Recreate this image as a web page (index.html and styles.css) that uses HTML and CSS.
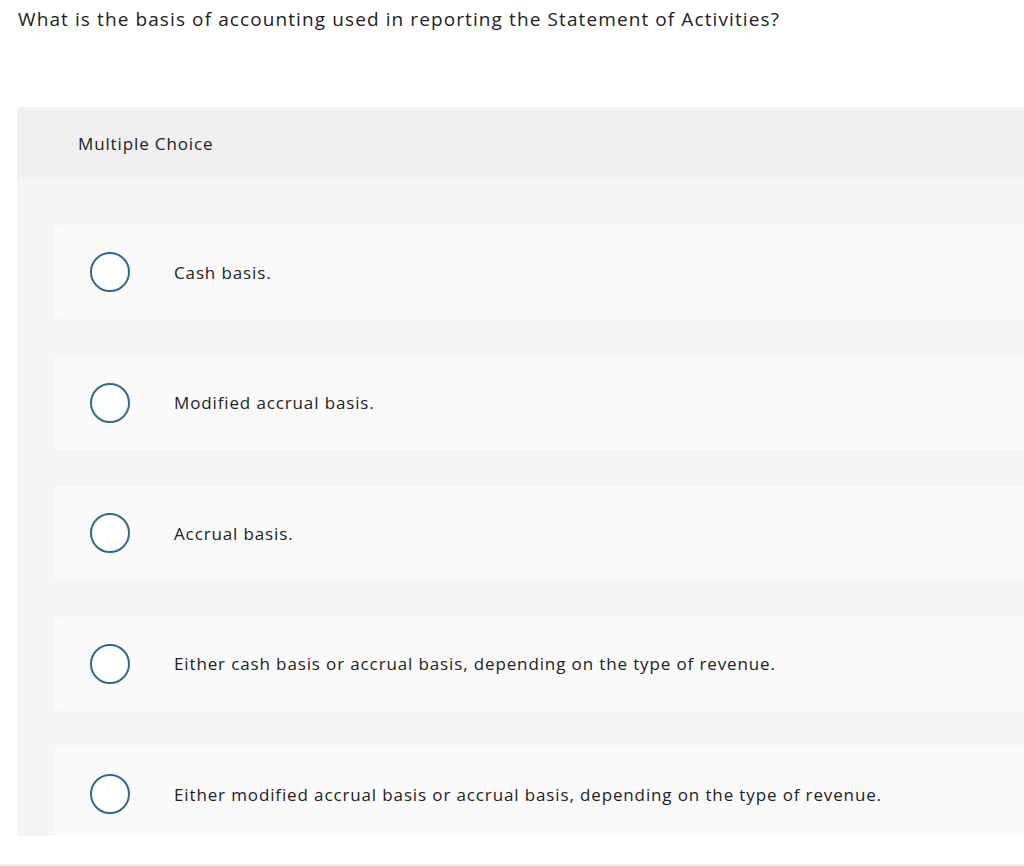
FILE: index.html
```html
<!DOCTYPE html>
<html>
<head>
<meta charset="utf-8">
<link rel="stylesheet" href="styles.css">
</head>
<body>
<div class="page">
  <p class="question">What is the basis of accounting used in reporting the Statement of Activities?</p>
  <div class="mc">
    <div class="mc-head">Multiple Choice</div>
    <div class="mc-body">
      <div class="opt"><span class="radio"></span><span class="opt-text">Cash basis.</span></div>
      <div class="opt"><span class="radio"></span><span class="opt-text">Modified accrual basis.</span></div>
      <div class="opt"><span class="radio"></span><span class="opt-text">Accrual basis.</span></div>
      <div class="opt"><span class="radio"></span><span class="opt-text">Either cash basis or accrual basis, depending on the type of revenue.</span></div>
      <div class="opt"><span class="radio"></span><span class="opt-text">Either modified accrual basis or accrual basis, depending on the type of revenue.</span></div>
    </div>
  </div>
  <div class="rule"></div>
</div>
</body>
</html>
```
FILE: styles.css
```css
html, body {
  margin: 0;
  padding: 0;
  background: #fff;
  overflow: hidden;
}
body {
  font-family: "Open Sans", "Liberation Sans", sans-serif;
  color: #2b2b2b;
}
.page {
  width: 1024px;
  height: 866px;
  overflow: hidden;
}
.question {
  margin: 0;
  padding: 6px 0 0 18px;
  height: 107px;
  box-sizing: border-box;
  font-size: 19px;
  letter-spacing: 1.1px;
  line-height: 26px;
  color: #222;
}
.mc {
  margin-left: 17px;
  width: 1040px;
  height: 729px;
  overflow: hidden;
  border-radius: 4px 4px 0 0;
}
.mc-head {
  background: #f0f0f0;
  height: 72px;
  box-sizing: border-box;
  padding-left: 61px;
  display: flex;
  align-items: center;
  font-size: 17px;
  letter-spacing: 0.87px;
  color: #222;
}
.mc-body {
  background: #f5f5f5;
  height: 657px;
  padding: 46px 0 0 37px;
  box-sizing: border-box;
  display: flex;
  flex-direction: column;
  gap: 36.5px;
}
.opt {
  flex: none;
  background: #fafafa;
  height: 94px;
  border-radius: 4px;
  display: flex;
  align-items: center;
  padding-left: 36px;
}
.radio {
  flex: none;
  width: 40px;
  height: 40px;
  box-sizing: border-box;
  border: 2px solid #336699;
  border-radius: 50%;
  background: #fff;
}
.opt-text {
  margin-left: 44px;
  font-size: 17px;
  letter-spacing: 0.87px;
  color: #222;
}
.rule {
  margin-top: 28px;
  height: 2px;
  background: #ececec;
}
```
